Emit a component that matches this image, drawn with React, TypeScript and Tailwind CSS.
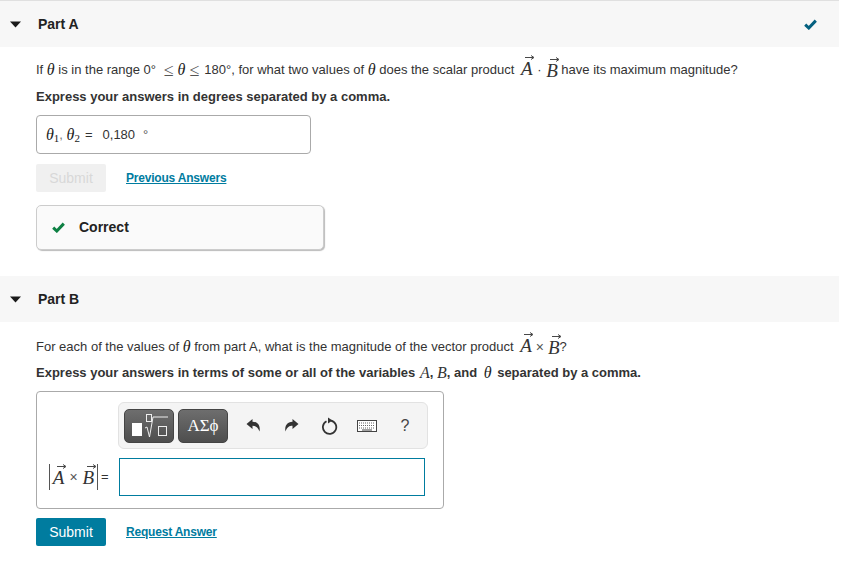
import React from 'react'

const sans = { fontFamily: '"Liberation Sans", Arial, sans-serif' }

function Caret() {
  return (
    <svg width="11" height="7" viewBox="0 0 11 7" className="flex-shrink-0">
      <path d="M0 0.5h11L5.5 6.5z" fill="#1a1a1a" />
    </svg>
  )
}

function Check({ color, className }: { color: string; className?: string }) {
  return (
    <svg width="13" height="11" viewBox="0 0 13 11" className={className}>
      <path d="M1.2 5.6l3.6 3.4 7-7.4" fill="none" stroke={color} strokeWidth="3" />
    </svg>
  )
}

function Theta() {
  return <i className="font-['Liberation_Serif',serif] text-[16px] font-normal text-[#222]">θ</i>
}

function Vec({ letter }: { letter: string }) {
  return (
    <span className="relative inline-block font-['Liberation_Serif',serif] text-[19px] font-normal italic leading-none">
      <svg width="10" height="5" viewBox="0 0 10 5" className="absolute left-[4px] top-[-4px]">
        <path d="M0 2.5h8M6 0.5l3 2-3 2" fill="none" stroke="#333" strokeWidth="0.9" />
      </svg>
      {letter}
    </span>
  )
}

function Leq() {
  return <span className="mx-[4px] font-['Liberation_Serif',serif] text-[18px] text-[#555]">≤</span>
}

function PartHeader({ title, done }: { title: string; done?: boolean }) {
  return (
    <div className="flex h-[46px] w-[839px] items-center bg-[#f7f7f7] pl-[10px] pr-[22px]">
      <Caret />
      <span className="ml-[17px] text-[14px] font-bold text-[#222]">{title}</span>
      {done && <Check color="#04607f" className="ml-auto" />}
    </div>
  )
}

function ToolIcon({ children }: { children: React.ReactNode }) {
  return <div className="flex w-[38px] items-center justify-center">{children}</div>
}

export default function App() {
  return (
    <div className="h-[568px] w-[849px] overflow-hidden bg-white text-[13px] text-[#333]" style={sans}>
      <div className="h-px w-[839px] bg-[#e0e0e0]" />
      <PartHeader title="Part A" done />
      <div className="pl-[36px]">
        <p className="mt-[13px] flex h-[20px] items-center whitespace-pre">
          If <Theta /> is in the range 0° <Leq /><Theta /><Leq /> <span className="ml-[1px]">180°, for what two values of </span><Theta /> does the scalar product <span className="ml-[3px]"><Vec letter="A" /></span><span className="mx-[1px]"> · </span><Vec letter="B" /> have its maximum magnitude?
        </p>
        <p className="mt-[7px] font-bold leading-[20px]">Express your answers in degrees separated by a comma.</p>
        <div className="mt-[8px] flex h-[39px] w-[275px] items-center rounded-[4px] border border-[#aaa] pl-[9px] whitespace-pre">
          <i className="font-['Liberation_Serif',serif] text-[16px] text-[#222]">θ<sub className="text-[11px] not-italic">1</sub></i>
          <span className="text-[#777]">, </span>
          <i className="font-['Liberation_Serif',serif] text-[16px] text-[#222]">θ<sub className="text-[11px] not-italic">2</sub></i>
          <span className="ml-[5px]">=</span>
          <span className="ml-[10px]">0,180</span>
          <span className="ml-[8px] text-[#555]">°</span>
        </div>
        <div className="mt-[10px] flex items-start">
          <div className="flex h-[28px] w-[70px] items-center justify-center rounded-[2px] bg-[#f0f0f0] text-[14px] text-[#d8d8d8]">Submit</div>
          <a className="ml-[20px] mt-[5px] text-[12px] font-bold tracking-[-0.2px] text-[#007c9f] underline">Previous Answers</a>
        </div>
        <div className="mt-[13px] flex h-[45px] w-[288px] items-center rounded-[5px] border border-[#ccc] bg-[#fafafa] pl-[15px] shadow-[1px_1px_1px_#bbb]">
          <Check color="#0d8043" />
          <span className="ml-[14px] text-[14px] font-bold text-[#222]">Correct</span>
        </div>
      </div>
      <div className="mt-[26px]">
        <PartHeader title="Part B" />
      </div>
      <div className="pl-[36px]">
        <p className="mt-[15px] flex h-[20px] items-center whitespace-pre">
          For each of the values of <Theta /> from part A, what is the magnitude of the vector product <span className="ml-[3px]"><Vec letter="A" /></span><span className="mx-[4px] text-[14px] text-[#555]">×</span><Vec letter="B" />?
        </p>
        <p className="mt-[6px] flex h-[20px] items-center whitespace-pre font-bold">
          Express your answers in terms of some or all of the variables <i className="ml-[1px] font-['Liberation_Serif',serif] text-[16px] font-normal">A</i>, <i className="font-['Liberation_Serif',serif] text-[16px] font-normal">B</i>, and <span className="ml-[3px] mr-[2px]"><Theta /></span> separated by a comma.
        </p>
        <div className="mt-[8px] h-[118px] w-[408px] rounded-[4px] border border-[#aaa] pl-[12px] pt-[10px]">
          <div className="ml-[69px] flex h-[47px] w-[310px] items-center rounded-[6px] border border-[#e2e2e2] bg-[#f4f4f4] pl-[5px]">
            <div className="flex h-[34px] w-[50px] items-center justify-center gap-[1px] rounded-[5px] border border-[#444] bg-gradient-to-b from-[#6e6e6e] to-[#4e4e4e]">
              <div className="ml-[5px] mt-[8px] h-[13px] w-[10px] bg-white" />
              <svg width="28" height="28" viewBox="0 0 28 28" fill="none" stroke="#eee" strokeWidth="1">
                <rect x="3.5" y="2.5" width="5" height="7" />
                <path d="M2 16l2-1 2.500 10 3.500-20h15" />
                <rect x="15.500" y="14.500" width="8" height="9" />
              </svg>
            </div>
            <div className="ml-[4px] flex h-[34px] w-[50px] items-center justify-center rounded-[5px] border border-[#444] bg-gradient-to-b from-[#6e6e6e] to-[#4e4e4e] font-['Liberation_Serif',serif] text-[17px] text-white">ΑΣϕ</div>
            <div className="ml-[6px] flex">
              <ToolIcon>
                <svg width="15" height="15" viewBox="0 0 15 15"><path d="M6.500 1L0.500 6l6 5V7.800c3 0 5.500 1.200 7 5.700 1.200-6-2-9.800-7-9.800z" fill="#333" /></svg>
              </ToolIcon>
              <ToolIcon>
                <svg width="15" height="15" viewBox="0 0 15 15"><path d="M8.500 1l6 5-6 5V7.800c-3 0-5.500 1.200-7 5.700-1.200-6 2-9.800 7-9.800z" fill="#333" /></svg>
              </ToolIcon>
              <ToolIcon>
                <svg width="18" height="18" viewBox="0 0 18 18" fill="none"><path d="M6.500 4.200A6.700 6.700 0 1 0 11 3.600" stroke="#333" strokeWidth="1.800" /><path d="M8 0.500l4.500 3-4.500 3z" fill="#333" /></svg>
              </ToolIcon>
              <ToolIcon>
                <svg width="20" height="12" viewBox="0 0 20 12"><rect x="0.500" y="0.500" width="19" height="11" fill="#fff" stroke="#444" /><path d="M2 3h16M2 5.500h16M2 8h16" stroke="#666" strokeWidth="1.200" strokeDasharray="1 1" /><path d="M5 10h10" stroke="#444" /></svg>
              </ToolIcon>
              <ToolIcon>
                <span className="text-[16px] text-[#444]">?</span>
              </ToolIcon>
            </div>
          </div>
          <div className="mt-[9px] flex items-center">
            <span className="flex h-[26px] w-[49px] items-center justify-center border-x border-x-[#555]">
              <Vec letter="A" /><span className="mx-[5px] text-[14px] text-[#555]">×</span><Vec letter="B" />
            </span>
            <span className="ml-[3px] w-[8px] text-[13px]">=</span>
            <div className="ml-[10px] h-[38px] w-[306px] border border-[#007c9f] bg-white" />
          </div>
        </div>
        <div className="mt-[9px] flex items-start">
          <div className="flex h-[28px] w-[70px] items-center justify-center rounded-[2px] bg-[#007c9f] text-[14px] text-white">Submit</div>
          <a className="ml-[20px] mt-[5px] text-[12px] font-bold tracking-[-0.2px] text-[#007c9f] underline">Request Answer</a>
        </div>
      </div>
    </div>
  )
}
